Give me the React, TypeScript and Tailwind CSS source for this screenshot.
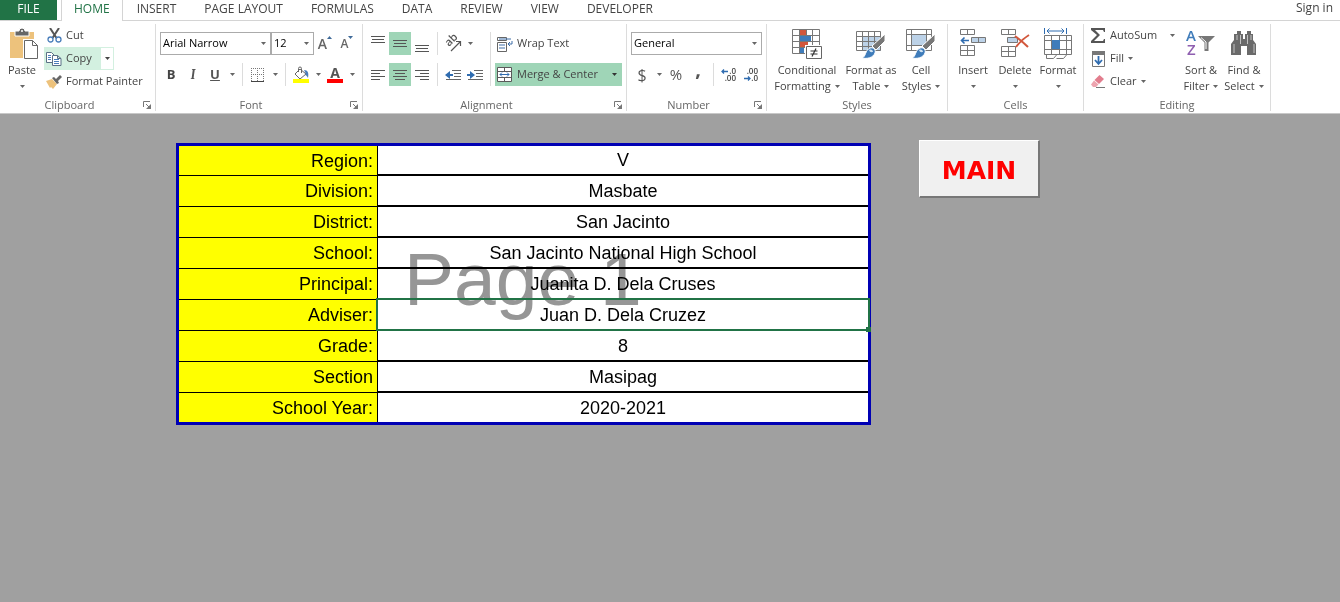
import { ReactNode, useState } from 'react';

const TABS = ['HOME', 'INSERT', 'PAGE LAYOUT', 'FORMULAS', 'DATA', 'REVIEW', 'VIEW', 'DEVELOPER'];

const ROWS = [
  { label: 'Region:', value: 'V' },
  { label: 'Division:', value: 'Masbate' },
  { label: 'District:', value: 'San Jacinto' },
  { label: 'School:', value: 'San Jacinto National High School' },
  { label: 'Principal:', value: 'Juanita D. Dela Cruses' },
  { label: 'Adviser:', value: 'Juan D. Dela Cruzez' },
  { label: 'Grade:', value: '8' },
  { label: 'Section', value: 'Masipag' },
  { label: 'School Year:', value: '2020-2021' },
];

/* ---------- small pieces ---------- */

function Caret({ className = '' }: { className?: string }) {
  return (
    <svg width="5" height="3" viewBox="0 0 5 3" className={`shrink-0 ${className}`} aria-hidden="true">
      <path d="M0 0h5L2.5 3z" fill="currentColor" />
    </svg>
  );
}

function CaretButton({ label }: { label: string }) {
  return (
    <button aria-label={label} className="flex h-[23px] w-3 items-center justify-center text-[#666]">
      <Caret />
    </button>
  );
}

function Separator() {
  return <div className="mx-1 h-[23px] w-px bg-[#dcdcdc]" />;
}

function IconButton({ label, active, children }: { label: string; active?: boolean; children: ReactNode }) {
  return (
    <button
      aria-label={label}
      title={label}
      className={`flex h-[23px] w-[22px] items-center justify-center ${active ? 'bg-[#9fd5b7]' : ''}`}
    >
      {children}
    </button>
  );
}

interface BigButtonProps {
  icon: ReactNode;
  lines: string[];
  className: string;
}

function BigButton({ icon, lines, className }: BigButtonProps) {
  return (
    <button className={`flex flex-col items-center whitespace-nowrap pt-1 ${className}`}>
      <span className="flex h-[34px] items-start justify-center">{icon}</span>
      <span className="leading-4">{lines[0]}</span>
      <span className="flex h-4 items-center gap-1 leading-4">
        {lines[1]}
        <Caret className="text-[#666]" />
      </span>
    </button>
  );
}

interface GroupProps {
  title: string;
  width: string;
  launcher?: boolean;
  children: ReactNode;
}

function Group({ title, width, launcher, children }: GroupProps) {
  return (
    <section aria-label={title} className={`shrink-0 border-r border-[#dcdcdc] ${width}`}>
      <div className="h-[75px]">{children}</div>
      <div className="flex h-3 items-center">
        <h2 className="flex-1 text-center leading-3 text-[#666]">{title}</h2>
        {launcher && (
          <button aria-label={`${title} settings`} className="flex w-4 justify-center">
            <svg width="8" height="8" viewBox="0 0 8 8" fill="none" stroke="#777" aria-hidden="true">
              <path d="M.5 6V.5H7M3 3l3 3" />
              <path d="M8 3v5H3z" fill="#777" stroke="none" />
            </svg>
          </button>
        )}
      </div>
    </section>
  );
}

function Dropdown({ label, value, width }: { label: string; value: string; width: string }) {
  return (
    <label className={`relative block ${width}`}>
      <select
        aria-label={label}
        defaultValue={value}
        className="block h-[23px] w-full appearance-none border border-[#ababab] bg-white pl-[2px] text-black outline-none"
      >
        <option>{value}</option>
      </select>
      <Caret className="pointer-events-none absolute right-[5px] top-[10px] text-[#666]" />
    </label>
  );
}

function Lines({ rows, y = 4 }: { rows: [number, number][]; y?: number }) {
  return (
    <svg width="14" height="18" viewBox="0 0 14 18" shapeRendering="crispEdges" aria-hidden="true">
      {rows.map(([x, w], i) => (
        <rect key={i} x={x} y={y + i * 3} width={w} height="1" fill="#555" />
      ))}
    </svg>
  );
}

/* ---------- icons ---------- */

function PasteIcon() {
  return (
    <svg width="34" height="32" viewBox="-4 0 34 32" aria-hidden="true">
      <path d="M1 4h24v26H1z" fill="#edc27c" />
      <path d="M6 3h4a3 3 0 0 1 6 0h4v5H6z" fill="#666" stroke="#fff" />
      <circle cx="13" cy="3" r="1" fill="#fff" />
      <path d="M14 11h11l5 5v16H14z" fill="#fff" />
      <path d="M15.500 12.500h8l5 5v13h-13zM23.500 12.500v5h5" fill="#fff" stroke="#666" />
    </svg>
  );
}

function CutIcon() {
  return (
    <svg width="15" height="15" viewBox="0 0 15 15" fill="none" aria-hidden="true">
      <path d="M3 0l6.500 10M12 0L5.500 10" stroke="#555" strokeWidth="2" />
      <circle cx="3.500" cy="11.500" r="2.500" stroke="#4a7ebb" strokeWidth="1.300" />
      <circle cx="11.500" cy="11.500" r="2.500" stroke="#4a7ebb" strokeWidth="1.300" />
    </svg>
  );
}

function CopyIcon() {
  return (
    <svg width="16" height="14" viewBox="0 0 16 14" fill="#fff" stroke="#5b7186" aria-hidden="true">
      <path d="M.5.5h5l3 3v7h-8z" />
      <path d="M2 3.500h3M2 5.500h3M2 7.500h3" stroke="#4a7ebb" />
      <path d="M6.500 3.500h5l3.500 3v7H6.500zM11.500 3.500v3h3.500" />
      <path d="M8 7.500h5M8 9.500h5M8 11.500h5" stroke="#4a7ebb" />
    </svg>
  );
}

function PainterIcon() {
  return (
    <svg width="16" height="14" viewBox="0 0 16 14" aria-hidden="true">
      <path d="M0 6l6-2 5 5-4 5-2-2-1 1z" fill="#edc27c" />
      <path d="M6 3l2-1 2 2 4-4 2 2-4 4 1 2-2 1z" fill="#666" />
    </svg>
  );
}

function BordersIcon() {
  return (
    <svg width="14" height="14" viewBox="0 0 14 14" fill="none" stroke="#777" shapeRendering="crispEdges" aria-hidden="true">
      <path d="M.5 0v13M6.500 0v13M12.500 0v13M0 .5h13M0 6.500h13" strokeDasharray="1 1" />
      <path d="M0 13.500h13" stroke="#444" />
    </svg>
  );
}

function FillColorIcon() {
  return (
    <svg width="17" height="17" viewBox="0 0 17 17" aria-hidden="true">
      <path d="M7 3l6 5-6 5-5-5z" fill="#fff" stroke="#666" />
      <path d="M5.500 6V2.500a1.500 1.500 0 0 1 3 0V7" fill="none" stroke="#666" />
      <path d="M11 4c4 0 5 3 4 8-1-2-2-3-3-3l1-1z" fill="#4a7ebb" />
      <path d="M0 13h16v4H0z" fill="#ff0" />
    </svg>
  );
}

function FontColorIcon() {
  return (
    <span className="flex flex-col items-center">
      <span className="h-3 text-sm font-bold leading-3 text-[#555]">A</span>
      <span className="h-1 w-4 bg-[#f00]" />
    </span>
  );
}

function GrowIcon({ shrink }: { shrink?: boolean }) {
  return (
    <span className="flex items-start text-[#666]">
      <span className={shrink ? 'text-xs font-semibold leading-4' : 'text-sm font-semibold leading-4'}>A</span>
      <svg width="5" height="3" viewBox="0 0 5 3" aria-hidden="true">
        <path d={shrink ? 'M0 0h5L2.500 3z' : 'M0 3h5L2.500 0z'} fill="#3f6a99" />
      </svg>
    </span>
  );
}

function OrientationIcon() {
  return (
    <svg width="18" height="16" viewBox="0 0 18 16" className="overflow-visible" aria-hidden="true">
      <text x="0" y="0" transform="translate(5 11) rotate(-45)" fontSize="11" fontWeight="600" fill="#555">
        ab
      </text>
      <path d="M7 15L16 6M12 5.500h4.500V10" fill="none" stroke="#555" strokeWidth="1.200" />
    </svg>
  );
}

function IndentIcon({ increase }: { increase?: boolean }) {
  return (
    <svg width="17" height="12" viewBox="0 0 17 12" aria-hidden="true">
      <path d="M7 1.500h9M9 4.500h7M9 7.500h7M1 10.500h15" stroke="#666" />
      <path d={increase ? 'M0 5h3V2l5 4-5 4V7H0z' : 'M8 5H5V2L0 6l5 4V7h3z'} fill="#2f6cb0" />
    </svg>
  );
}

function WrapIcon() {
  return (
    <svg width="16" height="16" viewBox="0 0 16 16" fill="none" stroke="#666" aria-hidden="true">
      <path d="M.5 1.500h9v3h-9zM.5 6.500h9v9h-9z" />
      <path d="M2 3h12M2 9h6M2 12h6" stroke="#3f6fa8" />
      <path d="M15 5v3h-4M13 6l-2 2 2 2" stroke="#3f6fa8" />
    </svg>
  );
}

function MergeIcon() {
  return (
    <svg width="16" height="16" viewBox="0 0 16 16" fill="#fff" stroke="#5a5a5a" aria-hidden="true">
      <path d="M.5.5h14v14H.5zM.5 4.500h14M.5 10.500h14M7.500.5v4M7.500 10.500v4" />
      <path d="M3 7.500h9M5 5.500l-2 2 2 2M10 5.500l2 2-2 2" fill="none" stroke="#2f6cb0" />
    </svg>
  );
}

function DecimalIcon({ decrease }: { decrease?: boolean }) {
  return (
    <svg width="18" height="16" viewBox="0 0 18 16" className="overflow-visible" aria-hidden="true">
      <text x="16" y="7" textAnchor="end" fontSize="8" fontWeight="600" fill="#444">
        {decrease ? '.00' : '.0'}
      </text>
      <text x="16" y="14" textAnchor="end" fontSize="8" fontWeight="600" fill="#444">
        {decrease ? '.0' : '.00'}
      </text>
      <path
        d={decrease ? 'M2 11.500h6M6 9.500l2 2-2 2' : 'M8 4.500H2M4 2.500l-2 2 2 2'}
        fill="none"
        stroke="#2f6cb0"
        strokeWidth="1.300"
      />
    </svg>
  );
}

function ConditionalIcon() {
  return (
    <svg width="30" height="31" viewBox="0 0 30 31" aria-hidden="true">
      <path d="M.5 1.500h27v24H.5z" fill="#fff" />
      <path d="M7 1h7v6H7zM7 14h9v6H7z" fill="#d2573c" />
      <path d="M7 7h12v6H7zM7 20h5v6H7z" fill="#3f7cba" />
      <path d="M.5 1.500h27v24H.5zM7.500 1v25M14.500 1v6M20.500 1v24M0 7.500h28M0 13.500h28M0 19.500h28" fill="none" stroke="#777" />
      <path d="M13 17h17v14H13z" fill="#fff" />
      <path d="M14.500 18.500h15v12h-15z" fill="#fff" stroke="#666" />
      <path d="M18.500 23h7M18.500 26h7M24 20.500l-4 8" fill="none" stroke="#333" strokeWidth="1.200" />
    </svg>
  );
}

function Brush() {
  return (
    <>
      <path d="M29 6v7l-9 9-4-4z" fill="#777" stroke="#fff" />
      <path d="M6 30c4-1 3-8 8-10 4-1 6 2 5 5-2 5-8 6-13 5z" fill="#3f7cba" stroke="#fff" />
      <path d="M13 22c2-1 4 0 4 2-1 0-3 1-4-2z" fill="#cfe2f3" />
    </>
  );
}

function FormatTableIcon() {
  return (
    <svg width="30" height="31" viewBox="0 0 30 31" aria-hidden="true">
      <path d="M.5 3.500h24v19H.5z" fill="#fff" />
      <path d="M7 9h18v14H7z" fill="#bcd2e8" />
      <path d="M.5 3.500h24v19H.5zM6.500 3v20M12.500 3v20M18.500 3v20M0 8.500h25M0 13.500h25M0 18.500h25" fill="none" stroke="#777" />
      <Brush />
    </svg>
  );
}

function CellStylesIcon() {
  return (
    <svg width="30" height="31" viewBox="0 0 30 31" aria-hidden="true">
      <path d="M.5 1.500h25v21H.5zM5.500 1v22M20.500 1v22M0 6.500h26M0 17.500h26" fill="#fff" stroke="#777" />
      <path d="M6 7h14v10H6z" fill="#bcd2e8" />
      <Brush />
    </svg>
  );
}

function InsertIcon() {
  return (
    <svg width="28" height="28" viewBox="0 0 28 28" fill="#fff" stroke="#777" aria-hidden="true">
      <path d="M1.500 1.500h14v5h-14zM8.500 1.500v5M1.500 17.500h14v10h-14zM8.500 17.500v10M1.500 22.500h14" />
      <path d="M12.500 9.500h14v5h-14zM19.500 9.500v5" fill="#bcd2e8" />
      <path d="M10 12.500H2.500M5.500 9.500l-3 3 3 3" fill="none" stroke="#2f6cb0" strokeWidth="1.600" />
    </svg>
  );
}

function DeleteIcon() {
  return (
    <svg width="30" height="29" viewBox="0 0 30 29" fill="#fff" stroke="#777" aria-hidden="true">
      <path d="M1.500 1.500h14v5h-14zM8.500 1.500v5M1.500 18.500h14v10h-14zM8.500 18.500v10M1.500 23.500h14" />
      <path d="M7.500 9.500h10v5h-10z" fill="#bcd2e8" />
      <path d="M15 8c4 3 9 7 13 11M29 7c-5 3-10 8-13 12" fill="none" stroke="#d2573c" strokeWidth="2" />
    </svg>
  );
}

function FormatIcon() {
  return (
    <svg width="30" height="31" viewBox="0 0 30 31" fill="#fff" stroke="#777" aria-hidden="true">
      <path d="M1.500 7.500h27v19h-27zM8.500 7v20M16.500 7v20M23.500 7v20M1 12.500h28M1 21.500h28" />
      <path d="M9 12h8v9H9z" fill="#3f7cba" stroke="none" />
      <path d="M3.500 27v3.500h7l3-3.500M13.500 30.500h7l3-3.500" fill="none" />
      <path d="M1.500 0v6M23.500 0v6M4 3h17M6.500.5L4 3l2.500 2.500M18.500.5L21 3l-2.500 2.500" fill="none" stroke="#2f6cb0" />
    </svg>
  );
}

function SigmaIcon() {
  return (
    <svg width="15" height="15" viewBox="0 0 15 15" aria-hidden="true">
      <path d="M0 0h14v4h-1l-1-2H4l5 5-6 6h9l1-2h1v4H0v-2l6-6-6-5z" fill="#555" />
    </svg>
  );
}

function FillIcon() {
  return (
    <svg width="15" height="16" viewBox="0 0 15 16" aria-hidden="true">
      <path d="M1.500.5h12v15h-12z" fill="#fff" stroke="#777" />
      <path d="M1 0h13v4H1z" fill="#777" />
      <path d="M7.500 5v8M4 9l3.500 4L11 9" fill="none" stroke="#2f6cb0" strokeWidth="1.800" />
    </svg>
  );
}

function EraserIcon() {
  return (
    <svg width="15" height="13" viewBox="0 0 15 13" aria-hidden="true">
      <path d="M8.500 0L13 4l-5 5-4.500-4z" fill="#e27d8d" />
      <path d="M3 5.500L7.500 9.500 5 12H2L0 9.500z" fill="#eda4af" />
      <path d="M5 12.500h9" stroke="#777" />
    </svg>
  );
}

function SortIcon() {
  return (
    <svg width="30" height="28" viewBox="0 0 30 28" className="overflow-visible" aria-hidden="true">
      <text x="0" y="13" fontSize="15" fontWeight="600" fill="#3f7cba">A</text>
      <text x="1" y="27" fontSize="15" fontWeight="600" fill="#8f5fb0">Z</text>
      <path d="M12 8h17l-6.500 6.500V23h-4v-8.500z" fill="#777" />
      <path d="M15 9.500l5 4.500v7" fill="none" stroke="#fff" />
    </svg>
  );
}

function BinocularsIcon() {
  return (
    <svg width="28" height="28" viewBox="0 0 28 28" aria-hidden="true">
      <path d="M7 3h4v3h2v5h2V6h2V3h4v3h2v6l3 4v11H17v-9h-6v9H1V16l3-4V6h3z" fill="#6a6a6a" />
      <path d="M7 7v5M21 7v5M4 16v9M24 16v9M10.500 7v9M17.500 7v9" stroke="#fff" strokeOpacity=".6" />
    </svg>
  );
}

/* ---------- ribbon ---------- */

function SmallCommand({ icon, label, caret }: { icon: ReactNode; label: string; caret?: boolean }) {
  return (
    <button className="flex h-[23px] items-center gap-1 whitespace-nowrap">
      <span className="flex w-4 justify-center">{icon}</span>
      {label}
      {caret && <Caret className="text-[#666]" />}
    </button>
  );
}

function Ribbon() {
  return (
    <div className="flex border-b border-[#c8c8c8] bg-white pb-[2px] pt-[3px]">
      <Group title="Clipboard" width="w-[156px]" launcher>
        <div className="flex">
          <BigButton icon={<PasteIcon />} lines={['Paste', '']} className="w-11" />
          <div className="flex flex-col">
            <div className="pl-[2px]">
              <SmallCommand icon={<CutIcon />} label="Cut" />
            </div>
            <div className="flex">
              <div className="w-14 bg-[#d3f0e0] pl-[2px]">
                <SmallCommand icon={<CopyIcon />} label="Copy" />
              </div>
              <button
                aria-label="Copy options"
                className="flex w-[14px] items-center justify-center border border-[#d3f0e0] text-[#444]"
              >
                <Caret />
              </button>
            </div>
            <div className="pl-[2px]">
              <SmallCommand icon={<PainterIcon />} label="Format Painter" />
            </div>
          </div>
        </div>
      </Group>

      <Group title="Font" width="w-[207px]" launcher>
        <div className="flex flex-col gap-2 pl-1 pt-2">
          <div className="flex items-center">
            <Dropdown label="Font name" value="Arial Narrow" width="w-[111px]" />
            <Dropdown label="Font size" value="12" width="w-[43px]" />
            <IconButton label="Increase font size"><GrowIcon /></IconButton>
            <IconButton label="Decrease font size"><GrowIcon shrink /></IconButton>
          </div>
          <div className="flex h-[23px] items-center">
            <IconButton label="Bold"><b className="text-[13px] text-[#444]">B</b></IconButton>
            <IconButton label="Italic"><i className="font-serif text-[13px] font-bold text-[#555]">I</i></IconButton>
            <IconButton label="Underline"><u className="text-[13px] font-bold text-[#555]">U</u></IconButton>
            <CaretButton label="Underline style" />
            <Separator />
            <IconButton label="Borders"><BordersIcon /></IconButton>
            <CaretButton label="Border style" />
            <Separator />
            <IconButton label="Fill color"><FillColorIcon /></IconButton>
            <CaretButton label="More fill colors" />
            <IconButton label="Font color"><FontColorIcon /></IconButton>
            <CaretButton label="More font colors" />
          </div>
        </div>
      </Group>

      <Group title="Alignment" width="w-[264px]" launcher>
        <div className="flex pl-1 pt-2">
          <div className="flex flex-col gap-2">
            <div className="flex items-center">
              <IconButton label="Top align"><Lines rows={[[0, 14], [1, 12], [0, 14]]} y={1} /></IconButton>
              <IconButton label="Middle align" active><Lines rows={[[0, 14], [1, 12], [0, 14]]} y={5} /></IconButton>
              <IconButton label="Bottom align"><Lines rows={[[0, 14], [1, 12], [0, 14]]} y={10} /></IconButton>
              <Separator />
              <IconButton label="Orientation"><OrientationIcon /></IconButton>
              <CaretButton label="Orientation options" />
            </div>
            <div className="flex items-center">
              <IconButton label="Align left"><Lines rows={[[0, 14], [0, 9], [0, 14], [0, 9]]} /></IconButton>
              <IconButton label="Center" active><Lines rows={[[0, 14], [2, 10], [0, 14], [2, 10]]} /></IconButton>
              <IconButton label="Align right"><Lines rows={[[0, 14], [5, 9], [0, 14], [5, 9]]} /></IconButton>
              <Separator />
              <IconButton label="Decrease indent"><IndentIcon /></IconButton>
              <IconButton label="Increase indent"><IndentIcon increase /></IconButton>
            </div>
          </div>
          <div className="mx-1 h-[54px] w-px bg-[#dcdcdc]" />
          <div className="flex flex-col gap-2">
            <div className="pl-[2px]">
              <SmallCommand icon={<WrapIcon />} label="Wrap Text" />
            </div>
            <div className="flex w-[127px] items-center justify-between bg-[#9fd5b7] pl-[2px] pr-[5px]">
              <SmallCommand icon={<MergeIcon />} label="Merge & Center" />
              <Caret className="text-[#333]" />
            </div>
          </div>
        </div>
      </Group>

      <Group title="Number" width="w-[140px]" launcher>
        <div className="flex flex-col gap-2 pl-1 pt-2">
          <Dropdown label="Number format" value="General" width="w-[131px]" />
          <div className="flex items-center text-[#555]">
            <IconButton label="Currency"><span className="text-base">$</span></IconButton>
            <CaretButton label="Currency options" />
            <IconButton label="Percent style"><span className="text-[15px]">%</span></IconButton>
            <IconButton label="Comma style"><b className="h-6 text-xl leading-3">,</b></IconButton>
            <Separator />
            <IconButton label="Increase decimal"><DecimalIcon /></IconButton>
            <IconButton label="Decrease decimal"><DecimalIcon decrease /></IconButton>
          </div>
        </div>
      </Group>

      <Group title="Styles" width="w-[181px]">
        <div className="flex pl-1">
          <BigButton icon={<ConditionalIcon />} lines={['Conditional', 'Formatting']} className="w-[72px]" />
          <BigButton icon={<FormatTableIcon />} lines={['Format as', 'Table']} className="w-14" />
          <BigButton icon={<CellStylesIcon />} lines={['Cell', 'Styles']} className="w-11" />
        </div>
      </Group>

      <Group title="Cells" width="w-[136px]">
        <div className="flex pl-1">
          <BigButton icon={<InsertIcon />} lines={['Insert', '']} className="w-[42px]" />
          <BigButton icon={<DeleteIcon />} lines={['Delete', '']} className="w-[42px]" />
          <BigButton icon={<FormatIcon />} lines={['Format', '']} className="w-11" />
        </div>
      </Group>

      <Group title="Editing" width="w-[187px]">
        <div className="flex pl-[6px]">
          <div className="flex w-[90px] flex-col">
            <div className="flex items-center justify-between pr-[5px]">
              <SmallCommand icon={<SigmaIcon />} label="AutoSum" />
              <Caret className="text-[#666]" />
            </div>
            <SmallCommand icon={<FillIcon />} label="Fill" caret />
            <SmallCommand icon={<EraserIcon />} label="Clear" caret />
          </div>
          <BigButton icon={<SortIcon />} lines={['Sort &', 'Filter']} className="w-[42px]" />
          <BigButton icon={<BinocularsIcon />} lines={['Find &', 'Select']} className="w-11" />
        </div>
      </Group>
    </div>
  );
}

/* ---------- sheet ---------- */

function InfoTable({ selected, onSelect }: { selected: number; onSelect: (row: number) => void }) {
  return (
    <div className="relative mt-[3px] w-[695px] border-[3px] border-[#0000b4]">
      <table className="w-full table-fixed border-separate border-spacing-0 font-['Liberation_Sans_Narrow','Liberation_Sans',sans-serif] text-[18px] leading-7 text-black">
        <tbody>
          {ROWS.map((row, i) => (
            <tr key={row.label} className="group">
              <th
                scope="row"
                className="h-[31px] w-[199px] border-b border-r border-black bg-[#ff0] p-0 pr-1 text-right font-normal group-first:h-[30px] group-last:h-[29px] group-last:border-b-0"
              >
                {row.label}
              </th>
              <td
                onClick={() => onSelect(i)}
                className="relative border-b-2 border-black bg-white p-0 text-center group-last:border-b-0"
              >
                {row.value}
                {selected === i && (
                  <span className="pointer-events-none absolute -inset-x-[2px] -bottom-[2px] -top-[2px] z-10 border-2 border-[#217346]">
                    <span className="absolute -bottom-[3px] -right-[3px] size-[5px] bg-[#217346]" />
                  </span>
                )}
              </td>
            </tr>
          ))}
        </tbody>
      </table>
      {/* page-break preview watermark */}
      <span className="pointer-events-none absolute left-[225px] top-[91px] font-['Liberation_Sans',sans-serif] text-[75px] leading-[84px] text-[#969696] mix-blend-multiply">
        Page 1
      </span>
    </div>
  );
}

export default function App() {
  const [tab, setTab] = useState('HOME');
  const [selected, setSelected] = useState(5);

  return (
    <div className="flex min-h-screen flex-col bg-[#a0a0a0] font-['Open_Sans',sans-serif] text-[11px] text-[#444]">
      <header>
        <nav className="flex h-[21px] items-stretch border-b border-[#d4d4d4] bg-white text-[12px] leading-4">
          <button className="mr-1 w-[57px] bg-[#217346] pb-[3px] text-white">FILE</button>
          {TABS.map((name) => (
            <button
              key={name}
              onClick={() => setTab(name)}
              className={`whitespace-nowrap pb-[3px] ${
                tab === name ? '-mb-px border-x border-[#d4d4d4] bg-white px-3 text-[#217346]' : 'px-[14px]'
              }`}
            >
              {name}
            </button>
          ))}
          <a href="#signin" className="ml-auto pr-[7px]">Sign in</a>
        </nav>
        <Ribbon />
      </header>
      <main className="flex flex-1 items-start gap-12 px-44 pt-[26px]">
        <InfoTable selected={selected} onSelect={setSelected} />
        <button className="h-[58px] w-[121px] border border-b-2 border-r-2 border-b-[#777] border-l-white border-r-[#777] border-t-white bg-[#f0f0f0] pt-1 font-['DejaVu_Sans','Noto_Sans',sans-serif] text-[25px] font-bold text-[#f00]">
          MAIN
        </button>
      </main>
    </div>
  );
}
